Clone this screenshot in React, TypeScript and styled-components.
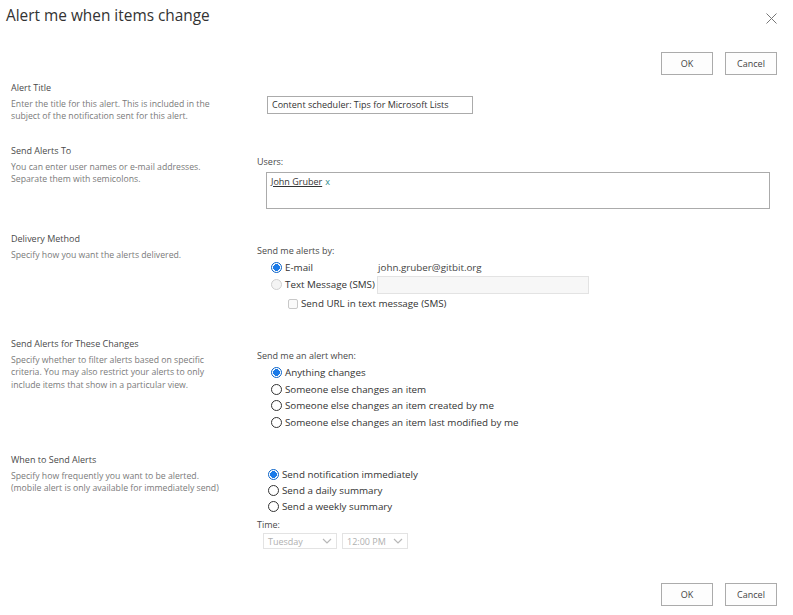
import styled, { createGlobalStyle } from 'styled-components'

const GlobalStyle = createGlobalStyle`
  body {
    margin: 0;
    background: #fff;
    font-family: "Open Sans", "Noto Sans", sans-serif;
    color: #333;
  }
`

const Dialog = styled.div`
  width: 793px;
  height: 615px;
  position: relative;
  box-sizing: border-box;
  padding: 0 16px 0 11px;
`

const Header = styled.div`
  display: flex;
  justify-content: space-between;
  align-items: flex-start;
  margin-left: -5px;
  padding-top: 4px;
  height: 40px;
`

const Title = styled.h1`
  margin: 0;
  font-size: 15.4px;
  font-weight: 400;
  line-height: 24px;
  color: #333;
`

const CloseButton = styled.button`
  border: none;
  background: none;
  padding: 0;
  margin: 8px 0 0;
  width: 12px;
  height: 12px;
  cursor: pointer;
`

const ButtonBar = styled.div<{ top: number }>`
  display: flex;
  justify-content: flex-end;
  gap: 12px;
  margin-top: ${({ top }) => top}px;
`

const Button = styled.button`
  width: 52px;
  height: 23px;
  border: 1px solid #ababab;
  background: #fdfdfd;
  font-family: inherit;
  font-size: 9px;
  color: #444;
  padding: 0;
`

const Section = styled.div<{ h: number }>`
  display: grid;
  grid-template-columns: 246px 1fr;
  min-height: ${({ h }) => h}px;
`

const Info = styled.div``

const SectionLabel = styled.div`
  font-size: 9px;
  line-height: 12px;
  color: #4a4a4a;
  margin-bottom: 4px;
`

const Description = styled.div`
  font-size: 8.7px;
  line-height: 12.3px;
  color: #7a7a7a;
  width: 219px;
`

const Control = styled.div<{ pad: number }>`
  padding-top: ${({ pad }) => pad}px;
  font-size: 9px;
`

const FieldLabel = styled.div`
  font-size: 9px;
  line-height: 12px;
  color: #4a4a4a;
  margin-bottom: 4px;
`

const TextBox = styled.div`
  margin-left: 10px;
  width: 206px;
  height: 18px;
  box-sizing: border-box;
  border: 1px solid #ababab;
  font-size: 9px;
  line-height: 16px;
  padding: 0 4px;
  color: #333;
  white-space: nowrap;
`

const PeopleBox = styled.div`
  margin-left: 9px;
  width: 504px;
  height: 37px;
  box-sizing: border-box;
  border: 1px solid #ababab;
  padding: 3px 4px;
  font-size: 9px;
  line-height: 12px;
`

const Person = styled.span`
  color: #333;
  text-decoration: underline;
`

const Remove = styled.span`
  color: #2a8a8a;
  margin-left: 3px;
`

const Options = styled.div<{ indent: number; gap: number }>`
  display: flex;
  flex-direction: column;
  gap: ${({ gap }) => gap}px;
  padding-left: ${({ indent }) => indent}px;
`

const OptionRow = styled.label`
  display: flex;
  align-items: center;
  height: 13px;
  font-size: 9.8px;
  color: #333;
  white-space: nowrap;
`

const Radio = styled.span<{ checked?: boolean; disabled?: boolean }>`
  width: 11px;
  height: 11px;
  box-sizing: border-box;
  border-radius: 50%;
  margin-right: 3px;
  flex: none;
  border: 1px solid
    ${({ checked, disabled }) => (checked ? '#0a63c9' : disabled ? '#d0d0d0' : '#333')};
  background: ${({ checked, disabled }) =>
    checked
      ? 'radial-gradient(circle, #1a7ae8 0 3.2px, #fff 3.6px 4px)'
      : disabled
        ? '#f4f4f4'
        : '#fff'};
`

const Checkbox = styled.span`
  width: 10px;
  height: 10px;
  box-sizing: border-box;
  border: 1px solid #c8c8c8;
  border-radius: 2px;
  background: #fafafa;
  margin-right: 3px;
  flex: none;
`

const Email = styled.span`
  margin-left: 65px;
  color: #444;
`

const SmsInput = styled.div`
  width: 212px;
  height: 18px;
  box-sizing: border-box;
  margin-left: 2px;
  border: 1px solid #e3e3e3;
  background: #f7f7f7;
`

const SubOption = styled(OptionRow)`
  margin-top: 2px;
  padding-left: 17px;
`

const SelectRow = styled.div`
  display: flex;
  gap: 5px;
  padding-left: 6px;
  margin-top: 1px;
`

const Select = styled.div<{ w: number }>`
  width: ${({ w }) => w}px;
  height: 16px;
  box-sizing: border-box;
  border: 1px solid #e3e3e3;
  display: flex;
  align-items: center;
  justify-content: space-between;
  padding: 0 4px;
  font-size: 9px;
  color: #b0b0b0;
`

const Chevron = () => (
  <svg width="10" height="6" viewBox="0 0 10 6">
    <polyline points="1,1 5,5 9,1" fill="none" stroke="#b8b8b8" strokeWidth="1.2" />
  </svg>
)

export default function App() {
  return (
    <>
      <GlobalStyle />
      <Dialog>
        <Header>
          <Title>Alert me when items change</Title>
          <CloseButton aria-label="Close">
            <svg width="11" height="11" viewBox="0 0 11 11">
              <path d="M0.5 0.5 L10.5 10.5 M10.5 0.5 L0.5 10.5" stroke="#777" strokeWidth="1" />
            </svg>
          </CloseButton>
        </Header>

        <ButtonBar top={8}>
          <Button>OK</Button>
          <Button>Cancel</Button>
        </ButtonBar>

        <div style={{ height: 7 }} />

        <Section h={63}>
          <Info>
            <SectionLabel>Alert Title</SectionLabel>
            <Description>
              Enter the title for this alert. This is included in the subject of the notification sent for this alert.
            </Description>
          </Info>
          <Control pad={14}>
            <TextBox>Content scheduler: Tips for Microsoft Lists</TextBox>
          </Control>
        </Section>

        <Section h={88}>
          <Info>
            <SectionLabel>Send Alerts To</SectionLabel>
            <Description>
              You can enter user names or e-mail addresses. Separate them with semicolons.
            </Description>
          </Info>
          <Control pad={11}>
            <FieldLabel>Users:</FieldLabel>
            <PeopleBox>
              <Person>John Gruber</Person>
              <Remove>x</Remove>
            </PeopleBox>
          </Control>
        </Section>

        <Section h={105}>
          <Info>
            <SectionLabel>Delivery Method</SectionLabel>
            <Description>Specify how you want the alerts delivered.</Description>
          </Info>
          <Control pad={12}>
            <FieldLabel>Send me alerts by:</FieldLabel>
            <Options indent={14} gap={4}>
              <OptionRow>
                <Radio checked />
                E-mail
                <Email>john.gruber@gitbit.org</Email>
              </OptionRow>
              <OptionRow>
                <Radio disabled />
                Text Message (SMS)
                <SmsInput />
              </OptionRow>
              <SubOption>
                <Checkbox />
                Send URL in text message (SMS)
              </SubOption>
            </Options>
          </Control>
        </Section>

        <Section h={116}>
          <Info>
            <SectionLabel>Send Alerts for These Changes</SectionLabel>
            <Description>
              Specify whether to filter alerts based on specific criteria. You may also restrict your alerts to only
              include items that show in a particular view.
            </Description>
          </Info>
          <Control pad={12}>
            <FieldLabel>Send me an alert when:</FieldLabel>
            <Options indent={14} gap={3.5}>
              <OptionRow>
                <Radio checked />
                Anything changes
              </OptionRow>
              <OptionRow>
                <Radio />
                Someone else changes an item
              </OptionRow>
              <OptionRow>
                <Radio />
                Someone else changes an item created by me
              </OptionRow>
              <OptionRow>
                <Radio />
                Someone else changes an item last modified by me
              </OptionRow>
            </Options>
          </Control>
        </Section>

        <Section h={105}>
          <Info>
            <SectionLabel>When to Send Alerts</SectionLabel>
            <Description>
              Specify how frequently you want to be alerted.
              <br />
              (mobile alert is only available for immediately send)
            </Description>
          </Info>
          <Control pad={14}>
            <Options indent={11} gap={3}>
              <OptionRow>
                <Radio checked />
                Send notification immediately
              </OptionRow>
              <OptionRow>
                <Radio />
                Send a daily summary
              </OptionRow>
              <OptionRow>
                <Radio />
                Send a weekly summary
              </OptionRow>
            </Options>
            <FieldLabel style={{ marginTop: 6, marginBottom: 2 }}>Time:</FieldLabel>
            <SelectRow>
              <Select w={74}>
                Tuesday
                <Chevron />
              </Select>
              <Select w={66}>
                12:00 PM
                <Chevron />
              </Select>
            </SelectRow>
          </Control>
        </Section>

        <ButtonBar top={24}>
          <Button>OK</Button>
          <Button>Cancel</Button>
        </ButtonBar>
      </Dialog>
    </>
  )
}
